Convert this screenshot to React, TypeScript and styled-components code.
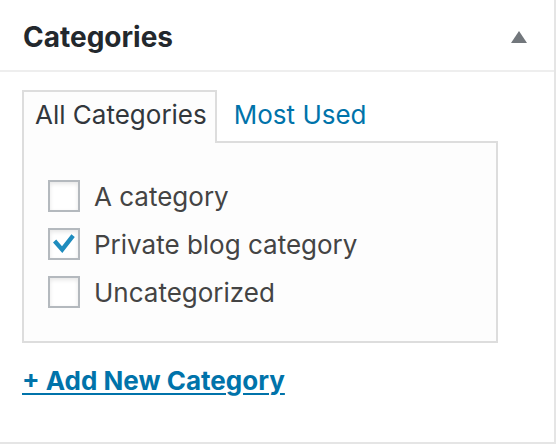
import { createGlobalStyle, styled } from "styled-components";

const GlobalStyle = createGlobalStyle`
  html, body {
    margin: 0;
    padding: 0;
    background: #fff;
  }
  body {
    font-family: Inter, "Open Sans", "Liberation Sans", sans-serif;
  }
`;

const Box = styled.div`
  box-sizing: border-box;
  width: 556px;
  height: 444px;
  background: #fff;
  border-right: 2px solid #e5e5e5;
  border-bottom: 2px solid #e5e5e5;
`;

const Header = styled.div`
  box-sizing: border-box;
  height: 72px;
  display: flex;
  align-items: center;
  justify-content: space-between;
  padding: 0 27px 0 23px;
  border-bottom: 2px solid #eee;
`;

const Title = styled.h2`
  margin: 4px 0 0;
  font-size: 28px;
  font-weight: 700;
  line-height: 40px;
  color: #23282d;
`;

const Toggle = styled.span`
  display: block;
  width: 0;
  height: 0;
  margin-top: 4px;
  border-left: 8px solid transparent;
  border-right: 8px solid transparent;
  border-bottom: 12px solid #72777c;
`;

const Inside = styled.div`
  padding: 18px 56px 0 22px;
`;

const Tabs = styled.ul`
  display: flex;
  gap: 4px;
  margin: 0;
  padding: 0;
  list-style: none;
  position: relative;
  z-index: 1;
`;

const Tab = styled.li<{ $active?: boolean }>`
  box-sizing: border-box;
  height: 53px;
  margin-bottom: -2px;
  padding: 3px 8px 8px 11px;
  border: 2px solid ${(p) => (p.$active ? "#ddd" : "transparent")};
  border-bottom: none;
  background: ${(p) => (p.$active ? "#fdfdfd" : "transparent")};
  font-size: 26px;
  line-height: 40px;
  color: ${(p) => (p.$active ? "#32373c" : "#0073aa")};
`;

const Panel = styled.div`
  box-sizing: border-box;
  height: 202px;
  padding: 29px 24px 25px;
  background: #fdfdfd;
  border: 2px solid #ddd;
`;

const Row = styled.label`
  display: flex;
  align-items: center;
  gap: 14px;
  height: 48px;
  font-size: 26px;
  color: #444;
`;

const Check = styled.span`
  box-sizing: border-box;
  flex: none;
  width: 32px;
  height: 32px;
  border: 2px solid #b4b9be;
  background: #fff;
  box-shadow: inset 0 2px 4px rgba(0, 0, 0, 0.1);
  display: flex;
  align-items: center;
  justify-content: center;
`;

const AddLink = styled.a`
  display: inline-block;
  margin-top: 18px;
  font-size: 26px;
  font-weight: 700;
  line-height: 40px;
  color: #0073aa;
  text-decoration: underline;
  text-decoration-thickness: 2px;
  text-underline-offset: 3px;
`;

const categories = [
  { name: "A category", checked: false },
  { name: "Private blog category", checked: true },
  { name: "Uncategorized", checked: false },
];

function CheckMark() {
  return (
    <svg width="28" height="28" viewBox="0 0 28 28">
      <path
        d="M3 12.5 L6.2 9.6 L12 16.2 L21.4 4.2 L24.8 7 L12.3 23 Z"
        fill="#1e8cbe"
      />
    </svg>
  );
}

export default function App() {
  return (
    <>
      <GlobalStyle />
      <Box>
        <Header>
          <Title>Categories</Title>
          <Toggle />
        </Header>
        <Inside>
          <Tabs>
            <Tab $active>All Categories</Tab>
            <Tab>Most Used</Tab>
          </Tabs>
          <Panel>
            {categories.map((c) => (
              <Row key={c.name}>
                <Check>{c.checked && <CheckMark />}</Check>
                {c.name}
              </Row>
            ))}
          </Panel>
          <AddLink href="#">+ Add New Category</AddLink>
        </Inside>
      </Box>
    </>
  );
}
